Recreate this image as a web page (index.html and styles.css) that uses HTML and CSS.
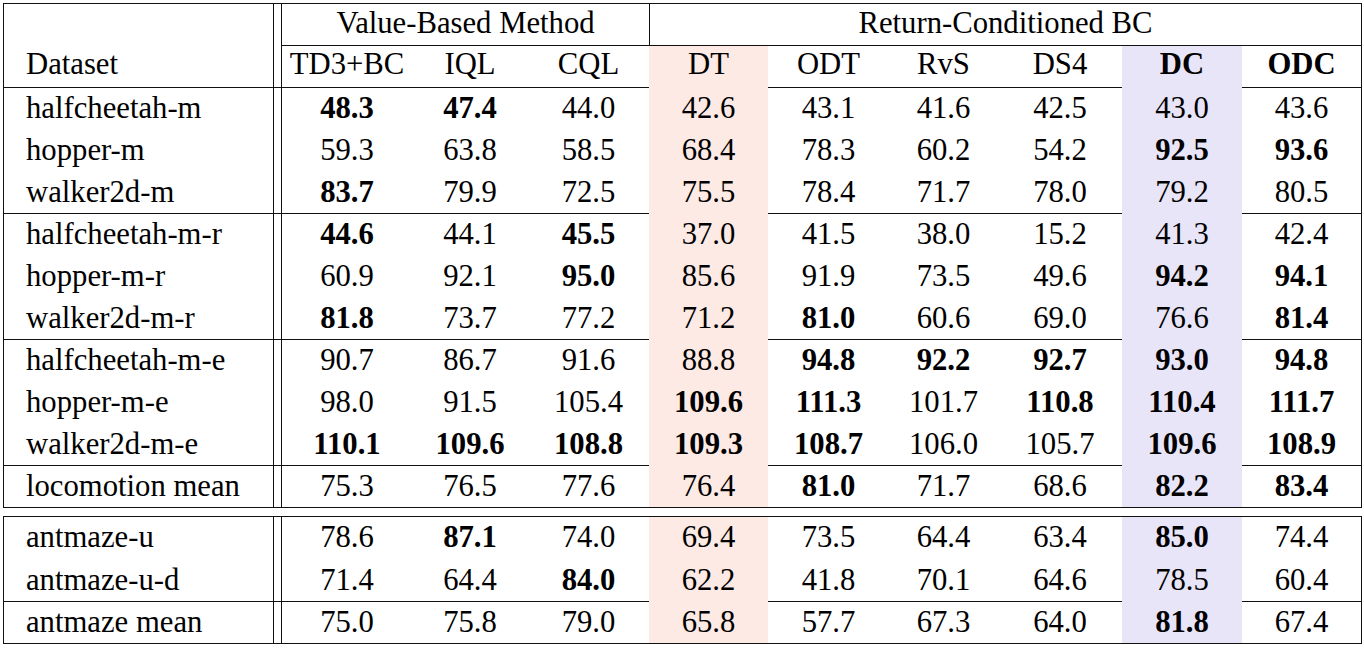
FILE: index.html
```html
<!DOCTYPE html>
<html>
<head>
<meta charset="utf-8">
<title>Results</title>
<link rel="stylesheet" href="styles.css">
</head>
<body>
<table class="results">
  <colgroup>
    <col class="c-ds"><col class="c-sp"><col class="c-td3"><col class="c-iql"><col class="c-cql">
    <col class="c-dt"><col class="c-odt"><col class="c-rvs"><col class="c-ds4"><col class="c-dc"><col class="c-odc">
  </colgroup>
  <tr class="grp">
    <td class="ds"></td><td class="sp"></td>
    <td class="vb" colspan="3">Value-Based Method</td>
    <td class="rc" colspan="6">Return-Conditioned BC</td>
  </tr>
  <tr class="hdr end">
    <td class="ds">Dataset</td><td class="sp"></td>
    <td>TD3+BC</td><td>IQL</td><td>CQL</td>
    <td class="dt">DT</td><td>ODT</td><td>RvS</td><td>DS4</td><td class="dc"><b>DC</b></td><td class="odc"><b>ODC</b></td>
  </tr>
  <tr>
    <td class="ds">halfcheetah-m</td><td class="sp"></td>
    <td><b>48.3</b></td><td><b>47.4</b></td><td>44.0</td>
    <td class="dt">42.6</td><td>43.1</td><td>41.6</td><td>42.5</td><td class="dc">43.0</td><td class="odc">43.6</td>
  </tr>
  <tr>
    <td class="ds">hopper-m</td><td class="sp"></td>
    <td>59.3</td><td>63.8</td><td>58.5</td>
    <td class="dt">68.4</td><td>78.3</td><td>60.2</td><td>54.2</td><td class="dc"><b>92.5</b></td><td class="odc"><b>93.6</b></td>
  </tr>
  <tr class="end">
    <td class="ds">walker2d-m</td><td class="sp"></td>
    <td><b>83.7</b></td><td>79.9</td><td>72.5</td>
    <td class="dt">75.5</td><td>78.4</td><td>71.7</td><td>78.0</td><td class="dc">79.2</td><td class="odc">80.5</td>
  </tr>
  <tr>
    <td class="ds">halfcheetah-m-r</td><td class="sp"></td>
    <td><b>44.6</b></td><td>44.1</td><td><b>45.5</b></td>
    <td class="dt">37.0</td><td>41.5</td><td>38.0</td><td>15.2</td><td class="dc">41.3</td><td class="odc">42.4</td>
  </tr>
  <tr>
    <td class="ds">hopper-m-r</td><td class="sp"></td>
    <td>60.9</td><td>92.1</td><td><b>95.0</b></td>
    <td class="dt">85.6</td><td>91.9</td><td>73.5</td><td>49.6</td><td class="dc"><b>94.2</b></td><td class="odc"><b>94.1</b></td>
  </tr>
  <tr class="end">
    <td class="ds">walker2d-m-r</td><td class="sp"></td>
    <td><b>81.8</b></td><td>73.7</td><td>77.2</td>
    <td class="dt">71.2</td><td><b>81.0</b></td><td>60.6</td><td>69.0</td><td class="dc">76.6</td><td class="odc"><b>81.4</b></td>
  </tr>
  <tr>
    <td class="ds">halfcheetah-m-e</td><td class="sp"></td>
    <td>90.7</td><td>86.7</td><td>91.6</td>
    <td class="dt">88.8</td><td><b>94.8</b></td><td><b>92.2</b></td><td><b>92.7</b></td><td class="dc"><b>93.0</b></td><td class="odc"><b>94.8</b></td>
  </tr>
  <tr>
    <td class="ds">hopper-m-e</td><td class="sp"></td>
    <td>98.0</td><td>91.5</td><td>105.4</td>
    <td class="dt"><b>109.6</b></td><td><b>111.3</b></td><td>101.7</td><td><b>110.8</b></td><td class="dc"><b>110.4</b></td><td class="odc"><b>111.7</b></td>
  </tr>
  <tr class="end">
    <td class="ds">walker2d-m-e</td><td class="sp"></td>
    <td><b>110.1</b></td><td><b>109.6</b></td><td><b>108.8</b></td>
    <td class="dt"><b>109.3</b></td><td><b>108.7</b></td><td>106.0</td><td>105.7</td><td class="dc"><b>109.6</b></td><td class="odc"><b>108.9</b></td>
  </tr>
  <tr class="end close">
    <td class="ds">locomotion mean</td><td class="sp"></td>
    <td>75.3</td><td>76.5</td><td>77.6</td>
    <td class="dt">76.4</td><td><b>81.0</b></td><td>71.7</td><td>68.6</td><td class="dc"><b>82.2</b></td><td class="odc"><b>83.4</b></td>
  </tr>
  <tr class="gap">
    <td colspan="11"></td>
  </tr>
  <tr class="tall">
    <td class="ds">antmaze-u</td><td class="sp"></td>
    <td>78.6</td><td><b>87.1</b></td><td>74.0</td>
    <td class="dt">69.4</td><td>73.5</td><td>64.4</td><td>63.4</td><td class="dc"><b>85.0</b></td><td class="odc">74.4</td>
  </tr>
  <tr class="end">
    <td class="ds">antmaze-u-d</td><td class="sp"></td>
    <td>71.4</td><td>64.4</td><td><b>84.0</b></td>
    <td class="dt">62.2</td><td>41.8</td><td>70.1</td><td>64.6</td><td class="dc">78.5</td><td class="odc">60.4</td>
  </tr>
  <tr class="end close">
    <td class="ds">antmaze mean</td><td class="sp"></td>
    <td>75.0</td><td>75.8</td><td>79.0</td>
    <td class="dt">65.8</td><td>57.7</td><td>67.3</td><td>64.0</td><td class="dc"><b>81.8</b></td><td class="odc">67.4</td>
  </tr>
</table>
</body>
</html>
```

FILE: styles.css
```css
html, body {
  margin: 0;
  padding: 0;
  background: #ffffff;
}

body {
  font-family: "Liberation Serif", "Times New Roman", serif;
  color: #000000;
}

.results {
  margin: 3px 0 0 3px;
  border-collapse: separate;
  border-spacing: 0;
  table-layout: fixed;
  width: 1359px;
  font-size: 30.7px;
}

.c-ds  { width: 271px; }
.c-sp  { width: 8px; }
.c-td3 { width: 130px; }
.c-iql { width: 116px; }
.c-cql { width: 121px; }
.c-dt  { width: 119px; }
.c-odt { width: 121px; }
.c-rvs { width: 109px; }
.c-ds4 { width: 124px; }
.c-dc  { width: 120px; }
.c-odc { width: 120px; }

.results tr {
  height: 42px;
}

.results td {
  padding: 3px 0 0;
  line-height: 35px;
  vertical-align: top;
  text-align: center;
  white-space: nowrap;
  border: 0 solid #111111;
}

.results b {
  font-weight: 700;
}

/* vertical rules */
.results td.ds {
  text-align: left;
  padding-left: 22px;
  border-left-width: 1px;
  border-right-width: 1px;
}

.results td.sp {
  border-right-width: 1px;
}

.results td.odc {
  border-right-width: 1px;
}

/* shaded columns */
.results td.dt {
  background: #fdeae5;
}

.results td.dc {
  background: #e8e5f8;
}

/* group header row */
.results tr.grp {
  height: 43px;
}

.results tr.grp td {
  border-top-width: 1px;
  padding-top: 2px;
}

.results tr.grp td.vb {
  border-bottom-width: 1px;
}

.results tr.grp td.rc {
  border-bottom-width: 1px;
  border-left-width: 1px;
  border-right-width: 1px;
}

.results tr.hdr td {
  padding-top: 1px;
}

/* section rules */
.results tr.end td {
  border-bottom-width: 1px;
}

.results tr.end td.dt {
  border-bottom-color: #fdeae5;
}

.results tr.end td.dc {
  border-bottom-color: #e8e5f8;
}

.results tr.close td.dt,
.results tr.close td.dc {
  border-bottom-color: #111111;
}

/* gap between the two blocks */
.results tr.gap {
  height: 9px;
}

.results tr.gap td {
  padding: 0;
  line-height: 0;
  font-size: 0;
  border-bottom-width: 1px;
}

.results tr.tall {
  height: 43px;
}
```
